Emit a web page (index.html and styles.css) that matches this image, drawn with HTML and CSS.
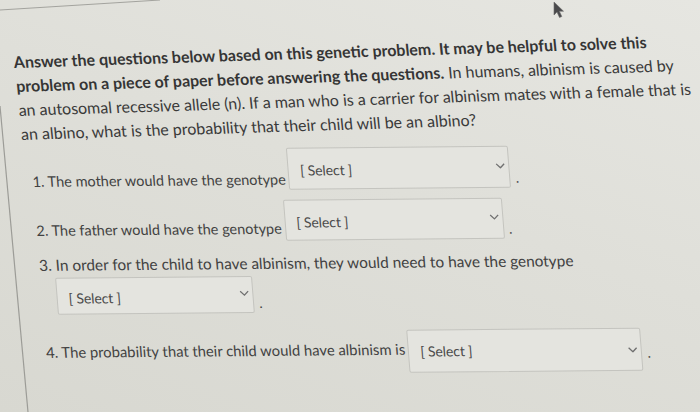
FILE: index.html
```html
<!DOCTYPE html>
<html lang="en">
<head>
<meta charset="utf-8">
<title>Genetics question</title>
<link rel="stylesheet" href="styles.css">
</head>
<body>
<div class="page">
  <svg class="decor" width="700" height="412" viewBox="0 0 700 412" aria-hidden="true">
    <line x1="0" y1="10" x2="160" y2="0" stroke="#a3a39e" stroke-width="1"/>
    <line x1="0" y1="106" x2="28" y2="412" stroke="#9c9c97" stroke-width="1.2"/>
  </svg>
  <svg class="cursor" width="14" height="18" viewBox="0 0 14 18" aria-hidden="true">
    <path d="M2 1 L2 14 L5 11 L7.5 16.5 L9.8 15.5 L7.3 10.2 L11.5 10.2 Z" fill="#4a4a4c" stroke="#6a6a6a" stroke-width="0.6"/>
  </svg>
  <div class="content">
    <p class="intro"><strong>Answer the questions below based on this genetic problem. It may be helpful to solve this problem on a piece of paper before answering the questions.</strong> In humans, albinism is caused by an autosomal recessive allele (n). If a man who is a carrier for albinism mates with a female that is an albino, what is the probability that their child will be an albino?</p>
    <div class="questions">
      <div class="q q1">
        <span class="label">1. The mother would have the genotype</span>
        <div class="select s1"><span class="ph">[ Select ]</span><svg class="chev" width="10" height="6" viewBox="0 0 10 6"><path d="M1 1 L5 5 L9 1" fill="none" stroke="#707070" stroke-width="1.3"/></svg></div>
        <span class="dot">.</span>
      </div>
      <div class="q q2">
        <span class="label">2. The father would have the genotype</span>
        <div class="select s2"><span class="ph">[ Select ]</span><svg class="chev" width="10" height="6" viewBox="0 0 10 6"><path d="M1 1 L5 5 L9 1" fill="none" stroke="#707070" stroke-width="1.3"/></svg></div>
        <span class="dot">.</span>
      </div>
      <div class="q3">
        <p class="label">3. In order for the child to have albinism, they would need to have the genotype</p>
        <div class="q q3row">
          <div class="select s3"><span class="ph">[ Select ]</span><svg class="chev" width="10" height="6" viewBox="0 0 10 6"><path d="M1 1 L5 5 L9 1" fill="none" stroke="#707070" stroke-width="1.3"/></svg></div>
          <span class="dot">.</span>
        </div>
      </div>
      <div class="q q4">
        <span class="label">4. The probability that their child would have albinism is</span>
        <div class="select s4"><span class="ph">[ Select ]</span><svg class="chev" width="10" height="6" viewBox="0 0 10 6"><path d="M1 1 L5 5 L9 1" fill="none" stroke="#707070" stroke-width="1.3"/></svg></div>
        <span class="dot">.</span>
      </div>
    </div>
  </div>
</div>
</body>
</html>
```

FILE: styles.css
```css
* { box-sizing: border-box; }
html, body { margin: 0; padding: 0; }
body {
  width: 700px;
  height: 412px;
  overflow: hidden;
  font-family: Lato, "Open Sans", sans-serif;
  color: #414141;
  background: linear-gradient(200deg, #e6e6e1 0%, #dfdfd9 45%, #d8d8d1 100%);
}
.page {
  position: relative;
  width: 700px;
  height: 412px;
  padding: 50px 0 0 14px;
}
.decor {
  position: absolute;
  left: 0;
  top: 0;
  pointer-events: none;
}
.cursor {
  position: absolute;
  left: 552px;
  top: 1px;
}
.content {
  transform: skewX(4deg);
  transform-origin: 0 0;
}
.intro {
  margin: 0;
  width: 676px;
  font-size: 16px;
  line-height: 24px;
  color: #3a3a3a;
  transform: rotate(-1.8deg);
  transform-origin: 0 50%;
}
.intro strong { font-weight: 700; color: #353535; }
.questions {
  padding: 4px 0 0 9px;
  transform: rotate(-0.5deg);
  transform-origin: 0 0;
  font-size: 14.5px;
  color: #424242;
}
.q {
  display: flex;
  align-items: flex-end;
}
.label { line-height: 20px; margin: 0; }
.q2 { margin-top: 10px; }
.q2 .label { margin-bottom: 2px; }
.q3 { margin-top: 10px; }
.q3 .label { line-height: 24px; font-size: 15.4px; }
.q3row { padding-left: 15px; margin-top: 1px; }
.q4 { margin-top: 18px; font-size: 14.8px; align-items: center; }
.q4 .label { margin-bottom: 6px; }
.q4 .dot { align-self: flex-end; margin-bottom: 8px; }
.select {
  display: flex;
  align-items: center;
  justify-content: space-between;
  height: 42px;
  margin-left: 3px;
  padding: 3px 3px 0 11px;
  background: #e4e4df;
  border: 1px solid #c4c4bf;
  border-radius: 2px;
  font-size: 14px;
  color: #4a4a4a;
}
.s1 { width: 222px; }
.s2 { width: 219px; height: 41px; }
.s3 { width: 197px; height: 37px; margin-left: 0; }
.s4 { width: 234px; height: 43px; padding-top: 0; }
.ph { letter-spacing: -0.1px; }
.chev { flex: none; margin-bottom: 6px; }
.s4 .chev { margin-bottom: 0; }
.dot { margin-left: 5px; line-height: 20px; font-size: 14px; }
```
